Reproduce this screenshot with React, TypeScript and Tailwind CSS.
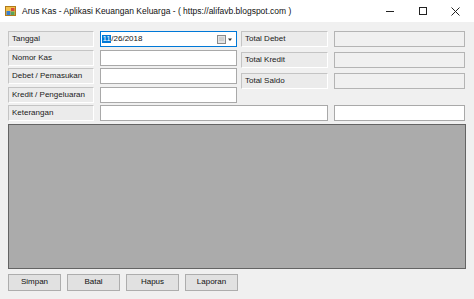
import React from "react";

const font = { fontFamily: '"Liberation Sans", Arial, sans-serif' };

function Label({ text, w }: { text: string; w: string }) {
  return (
    <div
      className={`${w} h-full flex items-center pl-[3px] bg-[#ebebeb] border-t border-l border-[#c4c4c4] border-r-white border-b-white border-r border-b text-[8px] text-[#1a1a1a] leading-none`}
    >
      {text}
    </div>
  );
}

export default function App() {
  return (
    <div className="w-[474px] h-[299px] bg-[#f0f0f0] overflow-hidden flex flex-col" style={font}>
      {/* title bar */}
      <div className="h-[22px] bg-white flex items-center relative shrink-0">
        <svg width="11" height="10" viewBox="0 0 11 10" className="ml-[5px]">
          <rect x="0.5" y="0.5" width="10" height="9" fill="#f3c04a" stroke="#b07a1a" />
          <rect x="1.5" y="5" width="4" height="4" fill="#3a7fd0" />
          <rect x="6" y="2" width="3.5" height="3" fill="#d9483b" />
          <rect x="6" y="5.5" width="3.5" height="3.5" fill="#5aa45a" />
        </svg>
        <span className="ml-[6px] text-[8.5px] text-[#111] leading-none" style={{ fontFamily: '"Liberation Sans", Arial, sans-serif' }}>
          Arus Kas - Aplikasi Keuangan Keluarga - ( https://alifavb.blogspot.com )
        </span>
        <div className="ml-auto flex items-center h-full">
          <div className="w-[33px] h-full flex items-center justify-center">
            <div className="w-[8px] h-px bg-[#222]" />
          </div>
          <div className="w-[33px] h-full flex items-center justify-center">
            <div className="w-[8px] h-[8px] border border-[#222]" />
          </div>
          <div className="w-[33px] h-full flex items-center justify-center mr-[2px]">
            <svg width="9" height="9" viewBox="0 0 9 9">
              <path d="M0.5 0.5 L8.5 8.5 M8.5 0.5 L0.5 8.5" stroke="#222" strokeWidth="1" />
            </svg>
          </div>
        </div>
      </div>

      {/* client */}
      <div className="pl-[8px] pt-[9px] flex flex-col">
        <div className="flex">
          {/* left */}
          <div className="flex flex-col gap-[2.5px]">
            <div className="flex h-[16px]">
              <Label text="Tanggal" w="w-[86px]" />
              <div className="ml-[6px] w-[137px] h-full bg-white border border-[#0078d7] flex items-center pl-[1px] text-[8px] text-[#111] leading-none">
                <span className="bg-[#0078d7] text-white px-[0.5px]">11</span>
                <span>/26/2018</span>
                <svg width="16" height="9" viewBox="0 0 16 9" className="ml-auto mr-[3px]">
                  <rect x="0.5" y="0.5" width="8" height="8" fill="#e4e4e4" stroke="#8a8a8a" />
                  <path d="M2 3 H7 M2 5 H7" stroke="#b0b0b0" strokeWidth="0.8" />
                  <path d="M11 3.5 L15 3.5 L13 6 Z" fill="#333" />
                </svg>
              </div>
            </div>
            <div className="flex h-[16px]">
              <Label text="Nomor Kas" w="w-[86px]" />
              <div className="ml-[6px] w-[137px] h-full bg-white border border-[#a9a9a9]" />
            </div>
            <div className="flex h-[16px]">
              <Label text="Debet / Pemasukan" w="w-[86px]" />
              <div className="ml-[6px] w-[137px] h-full bg-white border border-[#a9a9a9]" />
            </div>
            <div className="flex h-[16px]">
              <Label text="Kredit / Pengeluaran" w="w-[86px]" />
              <div className="ml-[6px] w-[137px] h-full bg-white border border-[#a9a9a9]" />
            </div>
          </div>
          {/* right */}
          <div className="ml-[4px] flex flex-col gap-[5.5px]">
            <div className="flex h-[15.5px]">
              <Label text="Total Debet" w="w-[87px]" />
              <div className="ml-[6px] w-[131px] h-full bg-[#f0f0f0] border border-[#b4b4b4]" />
            </div>
            <div className="flex h-[15.5px]">
              <Label text="Total Kredit" w="w-[87px]" />
              <div className="ml-[6px] w-[131px] h-full bg-[#f0f0f0] border border-[#b4b4b4]" />
            </div>
            <div className="flex h-[15.5px]">
              <Label text="Total Saldo" w="w-[87px]" />
              <div className="ml-[6px] w-[131px] h-full bg-[#f0f0f0] border border-[#b4b4b4]" />
            </div>
          </div>
        </div>

        <div className="flex h-[16px] mt-[2.5px]">
          <Label text="Keterangan" w="w-[86px]" />
          <div className="ml-[6px] w-[228px] h-full bg-white border border-[#a9a9a9]" />
          <div className="ml-[6px] w-[131px] h-full bg-white border border-[#a9a9a9]" />
        </div>

        <div className="mt-[2.5px] w-[458px] h-[145px] bg-[#ababab] border border-[#646464]" />

        <div className="mt-[5px] flex gap-[6px]">
          {["Simpan", "Batal", "Hapus", "Laporan"].map((t) => (
            <div
              key={t}
              className="w-[53px] h-[17px] bg-[#e1e1e1] border border-[#adadad] flex items-center justify-center text-[8px] text-[#111] leading-none"
            >
              {t}
            </div>
          ))}
        </div>
      </div>
    </div>
  );
}
